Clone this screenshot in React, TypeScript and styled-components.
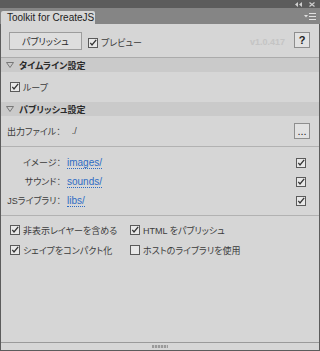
import React from "react";
import styled, { createGlobalStyle } from "styled-components";

const GlobalStyle = createGlobalStyle`
  html, body {
    margin: 0;
    padding: 0;
    background: #5c5c5c;
  }
  body {
    font-family: "Liberation Sans", "Noto Sans CJK JP", sans-serif;
  }
`;

const jp = `"Liberation Sans", "Noto Sans CJK JP", sans-serif`;

const Frame = styled.div`
  width: 320px;
  height: 351px;
  display: flex;
  flex-direction: column;
  background: #5c5c5c;
  overflow: hidden;
`;

const TopBar = styled.div`
  height: 8px;
  display: flex;
  justify-content: flex-end;
  align-items: center;
  gap: 7px;
  padding-right: 5px;
`;

const TabStrip = styled.div`
  height: 16px;
  background: #858585;
  display: flex;
  align-items: flex-end;
  justify-content: space-between;
  padding: 0 4px 0 1px;
`;

const Tab = styled.div`
  width: 94px;
  height: 13px;
  box-sizing: border-box;
  padding-left: 6px;
  background: #d6d6d6;
  color: #222;
  font-family: "Liberation Sans", sans-serif;
  font-size: 10px;
  line-height: 13px;
  white-space: nowrap;
  border-radius: 2px 2px 0 0;
`;

const MenuButton = styled.div`
  align-self: center;
  display: flex;
`;

const Body = styled.div`
  flex: 1;
  margin: 0 1px;
  background: #d6d6d6;
  display: flex;
  flex-direction: column;
  color: #3c3c3c;
  font-family: ${jp};
  font-size: 9px;
  font-feature-settings: "palt";
`;

const Toolbar = styled.div`
  height: 34px;
  display: flex;
  align-items: flex-start;
  padding: 8px 9px 0 8px;
  border-bottom: 1px solid #ababab;
  box-sizing: border-box;
`;

const PublishButton = styled.div`
  width: 73px;
  height: 18px;
  box-sizing: border-box;
  border: 1px solid #9d9d9d;
  background: #dedede;
  display: flex;
  align-items: center;
  justify-content: center;
  color: #2a2a2a;
`;

const CheckLabel = styled.label`
  display: flex;
  align-items: center;
  gap: 3px;
  white-space: nowrap;
`;

const Version = styled.span`
  margin-left: auto;
  margin-right: 9px;
  margin-top: 5px;
  font-family: "Liberation Sans", sans-serif;
  font-weight: bold;
  font-size: 9px;
  color: #c4c4c4;
`;

const SquareButton = styled.div`
  width: 16px;
  height: 16px;
  box-sizing: border-box;
  border: 1px solid #8e8e8e;
  background: #e2e2e2;
  display: flex;
  align-items: center;
  justify-content: center;
  font-family: "Liberation Sans", sans-serif;
  font-weight: bold;
  font-size: 11px;
  color: #222;
`;

const SectionHeader = styled.div`
  height: 14px;
  background: #cacaca;
  display: flex;
  align-items: center;
  gap: 5px;
  padding-left: 5px;
  font-weight: bold;
  color: #2a2a2a;
`;

const Section = styled.div<{ $h: number }>`
  height: ${({ $h }) => $h}px;
  display: flex;
  flex-direction: column;
  justify-content: center;
  padding: 0 9px;
`;

const OutputRow = styled.div`
  height: 30px;
  display: flex;
  align-items: center;
  padding: 0 9px 0 6px;
  border-bottom: 1px solid #b2b2b2;
`;

const Path = styled.span`
  margin-left: 11px;
  color: #444;
`;

const PathList = styled.div`
  display: grid;
  grid-template-columns: 60px 1fr 12px;
  grid-auto-rows: 19px;
  align-items: center;
  padding: 6px 11px 5px 0;
  border-bottom: 1px solid #b2b2b2;
`;

const PathLabel = styled.span`
  text-align: right;
  white-space: nowrap;
`;

const Link = styled.span`
  margin-left: 6px;
  font-family: "Liberation Sans", sans-serif;
  font-size: 10px;
  color: #2f6cc4;
  border-bottom: 1px dotted #2f6cc4;
  justify-self: start;
  line-height: 11px;
`;

const OptionGrid = styled.div`
  display: grid;
  grid-template-columns: 120px 1fr;
  grid-auto-rows: 20px;
  align-items: center;
  padding: 4px 9px 0;
`;

const Spacer = styled.div`
  flex: 1;
`;

const BottomBar = styled.div`
  height: 7px;
  border-top: 1px solid #9a9a9a;
  background: #d6d6d6;
  margin: 0 1px 1px;
  display: flex;
  justify-content: center;
  align-items: center;
`;

const Check = ({ checked = true }: { checked?: boolean }) => (
  <svg width="10" height="10" viewBox="0 0 10 10">
    <rect x="0.5" y="0.5" width="9" height="9" fill="#e8e8e8" stroke="#5a5a5a" />
    {checked && (
      <path d="M2.3 4.9 L4 6.9 L8.2 1.8" fill="none" stroke="#333" strokeWidth="1.3" />
    )}
  </svg>
);

const Triangle = () => (
  <svg width="8" height="6" viewBox="0 0 8 6">
    <path d="M0.5 0.5 H7.5 L4 5.5 Z" fill="none" stroke="#777" />
  </svg>
);

const App: React.FC = () => {
  return (
    <>
      <GlobalStyle />
      <Frame>
        <TopBar>
          <svg width="7" height="5" viewBox="0 0 7 5">
            <path d="M3 0 L0 2.5 L3 5 Z M7 0 L4 2.5 L7 5 Z" fill="#d0d0d0" />
          </svg>
          <svg width="6" height="5" viewBox="0 0 6 5">
            <path d="M0.5 0.5 L5.5 4.5 M5.5 0.5 L0.5 4.5" stroke="#d0d0d0" strokeWidth="1.2" />
          </svg>
        </TopBar>
        <TabStrip>
          <Tab>Toolkit for CreateJS</Tab>
          <MenuButton>
            <svg width="12" height="7" viewBox="0 0 12 7">
              <path d="M0 2 H4 L2 4.5 Z" fill="#e0e0e0" />
              <path d="M5 0.5 H12 M5 3.5 H12 M5 6.5 H12" stroke="#e0e0e0" strokeWidth="1" />
            </svg>
          </MenuButton>
        </TabStrip>
        <Body>
          <Toolbar>
            <PublishButton>パブリッシュ</PublishButton>
            <CheckLabel style={{ marginLeft: 6, marginTop: 4 }}>
              <Check />
              プレビュー
            </CheckLabel>
            <Version>v1.0.417</Version>
            <SquareButton>?</SquareButton>
          </Toolbar>
          <SectionHeader>
            <Triangle />
            タイムライン設定
          </SectionHeader>
          <Section $h={30}>
            <CheckLabel>
              <Check />
              ループ
            </CheckLabel>
          </Section>
          <SectionHeader>
            <Triangle />
            パブリッシュ設定
          </SectionHeader>
          <OutputRow>
            出力ファイル：
            <Path>./</Path>
            <Spacer />
            <SquareButton style={{ fontWeight: "normal" }}>...</SquareButton>
          </OutputRow>
          <PathList>
            <PathLabel>イメージ：</PathLabel>
            <Link>images/</Link>
            <Check />
            <PathLabel>サウンド：</PathLabel>
            <Link>sounds/</Link>
            <Check />
            <PathLabel>JSライブラリ：</PathLabel>
            <Link>libs/</Link>
            <Check />
          </PathList>
          <OptionGrid>
            <CheckLabel>
              <Check />
              非表示レイヤーを含める
            </CheckLabel>
            <CheckLabel>
              <Check />
              HTML をパブリッシュ
            </CheckLabel>
            <CheckLabel>
              <Check />
              シェイプをコンパクト化
            </CheckLabel>
            <CheckLabel>
              <Check checked={false} />
              ホストのライブラリを使用
            </CheckLabel>
          </OptionGrid>
          <Spacer />
        </Body>
        <BottomBar>
          <svg width="16" height="3" viewBox="0 0 16 3">
            <path d="M0 0 H16 V3 H0 Z" fill="#9a9a9a" />
            <path d="M2.5 0 V3 M5.5 0 V3 M8.5 0 V3 M11.5 0 V3 M14.5 0 V3" stroke="#c8c8c8" />
          </svg>
        </BottomBar>
      </Frame>
    </>
  );
};

export default App;
